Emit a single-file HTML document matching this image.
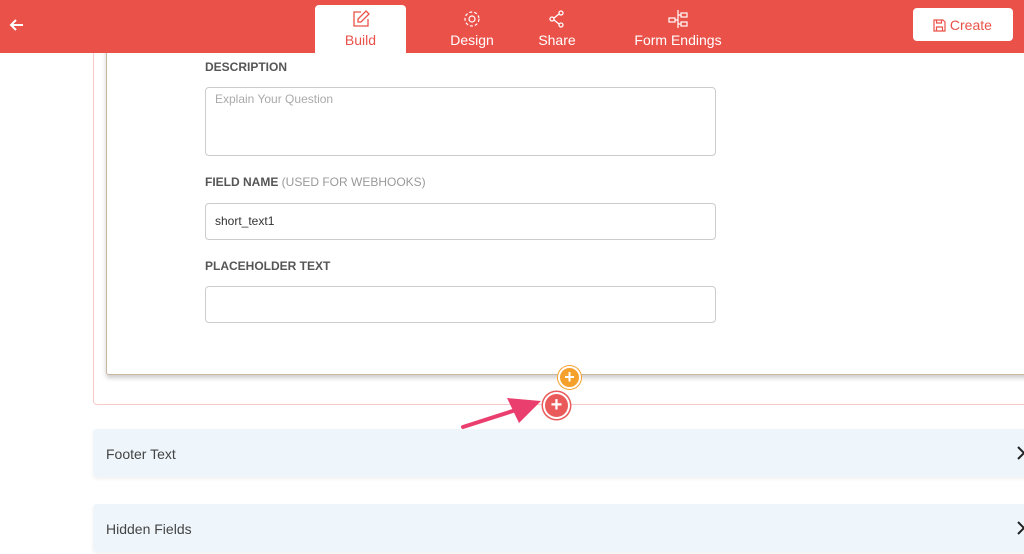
<!DOCTYPE html>
<html><head><style>
*{margin:0;padding:0;box-sizing:border-box}
body{width:1024px;height:554px;overflow:hidden;background:#fff;font-family:"Liberation Sans",sans-serif;position:relative}
.hdr{position:absolute;left:0;top:0;width:1024px;height:53px;background:#ea5149;z-index:5}
.tab{position:absolute;top:5px;height:48px;text-align:center;color:#fff;font-size:14px}
.tab svg{display:block;margin:4px auto 3px}
.lbl{position:absolute;left:205px;font-size:12px;font-weight:bold;color:#555}
.inp{position:absolute;left:205px;width:511px;border:1px solid #ccc;border-radius:4px;font-size:12px;color:#333;padding:0 9px}
.panel{position:absolute;left:93px;width:940px;height:48px;background:#eef6fc;border-radius:4px;box-shadow:0 2px 4px rgba(0,0,0,.06);font-size:14px;color:#444;padding:17px 13px}
.chev{position:absolute;left:924px;top:17px}
</style></head><body>
<div style="position:absolute;left:93px;top:40px;width:960px;height:365px;border:1px solid #f8c9c9;border-radius:4px"></div>
<div style="position:absolute;left:106px;top:40px;width:940px;height:335px;background:#fff;border:1px solid #c9b79f;border-radius:3px;box-shadow:0 3px 5px rgba(0,0,0,.2)"></div>
<div class="hdr">
<svg style="position:absolute;left:9px;top:17px" width="16" height="16" viewBox="0 0 16 16"><path d="M14 8H2M7 3L2 8l5 5" stroke="#fff" stroke-width="2" fill="none"/></svg>
<div class="tab" style="left:315px;width:91px;background:#fff;border-radius:4px 4px 0 0;color:#ea5149">
<svg width="20" height="20" viewBox="0 0 20 20" fill="none" stroke="#ea5149" stroke-width="1.3"><path d="M10 3H3v14h14v-7"/><path d="M15 2l3 3-8 8H7v-3z"/></svg>Build</div>
<div class="tab" style="left:430px;width:84px"><svg width="20" height="20" viewBox="0 0 20 20" fill="none" stroke="#fff" stroke-width="1.2"><circle cx="10" cy="10" r="3"/><circle cx="10" cy="10" r="7" stroke-dasharray="3 2"/></svg>Design</div>
<div class="tab" style="left:522px;width:70px"><svg width="20" height="20" viewBox="0 0 20 20" fill="none" stroke="#fff" stroke-width="1.3"><circle cx="14" cy="4" r="2"/><circle cx="5" cy="10" r="2"/><circle cx="14" cy="16" r="2"/><path d="M12 5l-5 4M7 11l5 4"/></svg>Share</div>
<div class="tab" style="left:628px;width:100px"><svg width="22" height="20" viewBox="0 0 22 20" fill="none" stroke="#fff" stroke-width="1.2"><path d="M11 1v18"/><rect x="14" y="4" width="6" height="4"/><rect x="2" y="9" width="6" height="4"/><rect x="14" y="13" width="6" height="4"/><path d="M11 6h3M8 11h3M11 15h3"/></svg>Form Endings</div>
<div style="position:absolute;left:913px;top:8px;width:100px;height:33px;background:#fff;border-radius:4px;color:#ea5149;font-size:14px;padding-top:9px;padding-left:20px">
<svg style="vertical-align:-2px" width="13" height="13" viewBox="0 0 13 13" fill="none" stroke="#ea5149" stroke-width="1.2"><path d="M1 1h9l2 2v9H1z"/><path d="M3.5 1v3h5V1M3.5 12V8h6v4"/></svg> Create</div>
</div>
<div class="lbl" style="top:60px">DESCRIPTION</div>
<div class="inp" style="top:87px;height:69px;padding-top:4px;color:#aaa">Explain Your Question</div>
<div class="lbl" style="top:175px">FIELD NAME <span style="font-weight:normal;color:#999">(USED FOR WEBHOOKS)</span></div>
<div class="inp" style="top:203px;height:37px;line-height:35px">short_text1</div>
<div class="lbl" style="top:259px">PLACEHOLDER TEXT</div>
<div class="inp" style="top:286px;height:37px"></div>
<div style="position:absolute;left:558px;top:366px;width:23px;height:23px;border-radius:50%;background:#f5a02a;border:2px solid #fff;box-shadow:0 0 0 1px #f5a02a;color:#fff;text-align:center;font-size:18px;line-height:18px;font-weight:bold">+</div>
<div style="position:absolute;left:543px;top:392px;width:27px;height:27px;border-radius:50%;background:#ea5a5a;border:2px solid #fff;box-shadow:0 0 0 1.5px #ea5a5a;color:#fff;text-align:center;font-size:20px;line-height:22px;font-weight:bold">+</div>
<svg style="position:absolute;left:455px;top:390px" width="90" height="45" viewBox="0 0 90 45"><path d="M8 37L64 19" stroke="#ea3f6e" stroke-width="4" stroke-linecap="round"/><path d="M52 8L86 11L64 33z" fill="#ea3f6e"/></svg>
<div class="panel" style="top:429px">Footer Text<svg class="chev" width="8" height="14" viewBox="0 0 8 14"><path d="M1 1l6 6-6 6" stroke="#222" stroke-width="2" fill="none"/></svg></div>
<div class="panel" style="top:504px">Hidden Fields<svg class="chev" width="8" height="14" viewBox="0 0 8 14"><path d="M1 1l6 6-6 6" stroke="#222" stroke-width="2" fill="none"/></svg></div>
</body></html>
